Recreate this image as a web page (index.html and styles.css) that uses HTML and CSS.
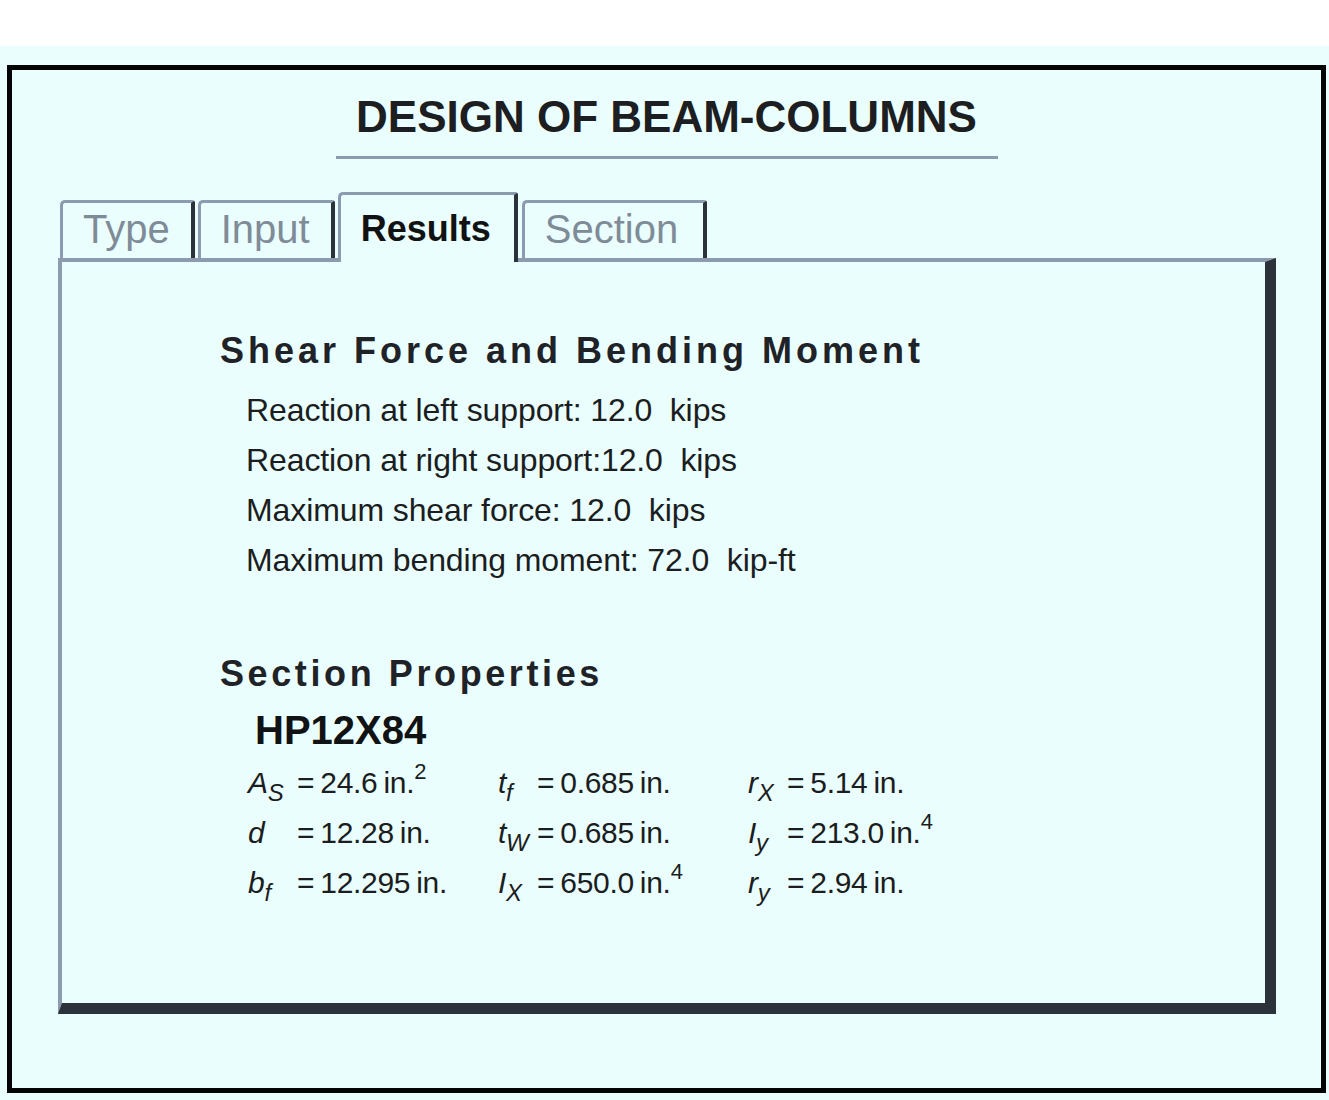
FILE: index.html
```html
<!DOCTYPE html>
<html>
<head>
<meta charset="utf-8">
<title>Design of Beam-Columns</title>
<link rel="stylesheet" href="styles.css">
</head>
<body>
<div class="page">
  <div class="frame">
    <h1 class="title">DESIGN OF BEAM-COLUMNS</h1>
    <div class="rule"></div>
    <div class="tabs">
      <div class="tab">Type</div>
      <div class="tab">Input</div>
      <div class="tab active">Results</div>
      <div class="tab wide">Section</div>
    </div>
    <div class="panel">
      <h2 class="heading">Shear Force and Bending Moment</h2>
      <div class="lines">
        <div class="line">Reaction at left support: 12.0&nbsp; kips</div>
        <div class="line">Reaction at right support:12.0&nbsp; kips</div>
        <div class="line">Maximum shear force: 12.0&nbsp; kips</div>
        <div class="line">Maximum bending moment: 72.0&nbsp; kip-ft</div>
      </div>
      <h2 class="heading heading-2">Section Properties</h2>
      <div class="shape">HP12X84</div>
      <div class="props">
        <div class="cell c1"><span class="var">A<sub>S</sub></span>= 24.6 in.<sup>2</sup></div>
        <div class="cell c2"><span class="var">t<sub>f</sub></span>= 0.685 in.</div>
        <div class="cell c3"><span class="var">r<sub>X</sub></span>= 5.14 in.</div>
        <div class="cell c1"><span class="var">d</span>= 12.28 in.</div>
        <div class="cell c2"><span class="var">t<sub>W</sub></span>= 0.685 in.</div>
        <div class="cell c3"><span class="var">I<sub>y</sub></span>= 213.0 in.<sup>4</sup></div>
        <div class="cell c1"><span class="var">b<sub>f</sub></span>= 12.295 in.</div>
        <div class="cell c2"><span class="var">I<sub>X</sub></span>= 650.0 in.<sup>4</sup></div>
        <div class="cell c3"><span class="var">r<sub>y</sub></span>= 2.94 in.</div>
      </div>
    </div>
  </div>
</div>
</body>
</html>
```

FILE: styles.css
```css
html, body {
  margin: 0;
  padding: 0;
  background: #ffffff;
  font-family: "Liberation Sans", Arial, sans-serif;
  color: #1b1d20;
}

.page {
  margin-top: 46px;
  background: #eafefe;
  padding: 19px 3px 7px 7px;
}

.frame {
  border: 5px solid #050505;
  box-sizing: border-box;
  height: 1028px;
  padding-top: 22px;
  display: flex;
  flex-direction: column;
}

.title {
  margin: 0;
  font-size: 44px;
  line-height: 50px;
  font-weight: bold;
  text-align: center;
  color: #1c1e21;
}

.rule {
  width: 662px;
  height: 0;
  border-top: 3px solid #8d9bb1;
  margin: 14px auto 0 auto;
}

.tabs {
  display: flex;
  align-items: flex-start;
  gap: 3px;
  margin: 33px 0 -4px 48px;
  height: 70px;
}

.tab {
  box-sizing: border-box;
  height: 58px;
  margin-top: 8px;
  padding: 0 21px 0 20px;
  border-top: 3px solid #8d9bb1;
  border-left: 3px solid #8d9bb1;
  border-right: 4px solid #2c3239;
  border-top-left-radius: 5px;
  border-top-right-radius: 3px;
  font-size: 40px;
  line-height: 52px;
  color: #808b98;
  background: #eafefe;
}

.tab.wide {
  padding-right: 25px;
  margin-left: 1px;
}

.tab.active {
  height: 70px;
  margin-top: 0;
  font-size: 36px;
  font-weight: bold;
  line-height: 68px;
  color: #111214;
  position: relative;
  z-index: 1;
  padding: 0 23px 0 20px;
}

.panel {
  box-sizing: border-box;
  height: 756px;
  margin: 0 45px 0 46px;
  border-top: 4px solid #8d9bb1;
  border-left: 4px solid #8d9bb1;
  border-right: 11px solid #2c3239;
  border-bottom: 11px solid #2c3239;
  padding: 64px 0 0 158px;
}

.heading {
  margin: 0;
  font-size: 36px;
  line-height: 50px;
  font-weight: bold;
  letter-spacing: 4px;
  color: #1f2226;
}

.heading-2 {
  margin-top: 64px;
  letter-spacing: 3.6px;
}

.lines {
  margin-top: 9px;
  padding-left: 26px;
}

.line {
  font-size: 32px;
  line-height: 50px;
  letter-spacing: -0.1px;
}

.shape {
  margin-top: 6px;
  padding-left: 35px;
  font-size: 40px;
  line-height: 50px;
  font-weight: bold;
  color: #111214;
}

.props {
  margin-top: 3px;
  padding-left: 28px;
  display: grid;
  grid-template-columns: 250px 250px 250px;
}

.cell {
  font-size: 30px;
  line-height: 50px;
  white-space: nowrap;
  letter-spacing: -0.3px;
  word-spacing: -2px;
}

.var {
  display: inline-block;
  font-style: italic;
  width: 39px;
}

.c1 .var {
  width: 49px;
}

.var sub {
  font-size: 24px;
  vertical-align: -8px;
  line-height: 0;
}

.cell sup {
  font-size: 22px;
  vertical-align: 14px;
  line-height: 0;
}
```
